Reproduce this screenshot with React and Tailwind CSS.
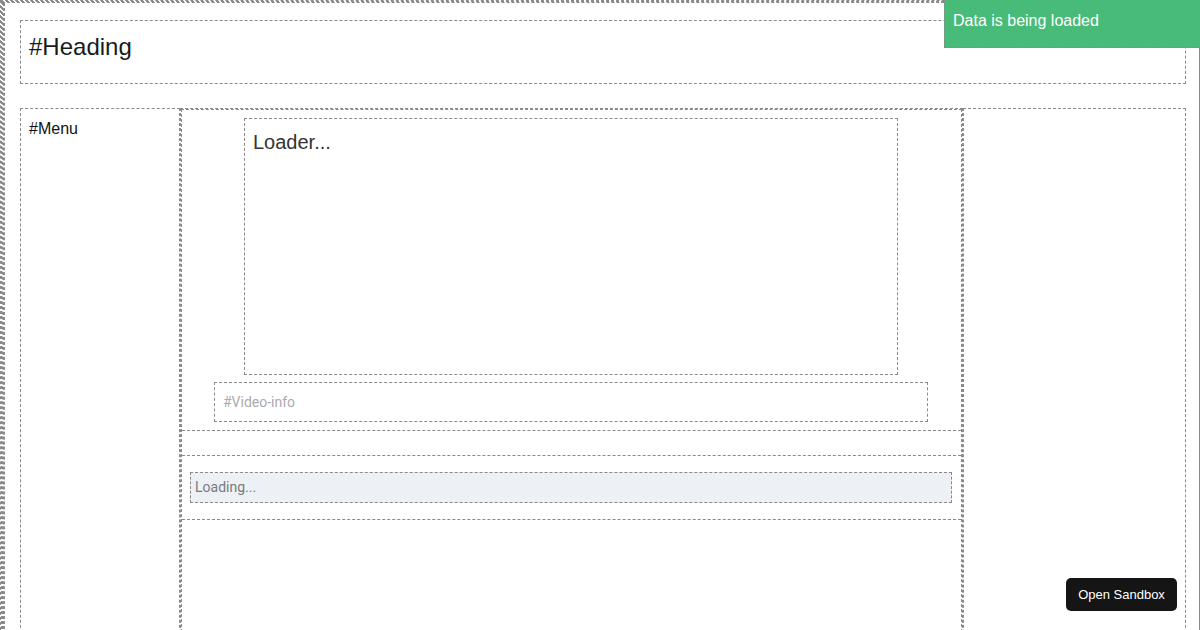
export default function App() {
  const d = "border-dashed border-[#8a8a8a]";
  return (
    <div className="relative w-[1200px] h-[630px] overflow-hidden bg-white" style={{ fontFamily: '"Liberation Sans", Arial, sans-serif' }}>
      <div className={`h-[640px] border ${d}`} style={{ borderRightStyle: "solid" }}>
        <div className={`h-full border-l border-t ${d}`}>
          <div className={`h-full border-l border-t ${d}`}>
            <div className={`h-full border-l ${d}`}>
              <div className={`h-full border-l ${d} pl-[15px] pt-[17px]`}>
                <div className={`w-[1166px] h-[64px] border ${d} px-[8px] pt-[11px]`}>
                  <div className="text-[24px] leading-[30px] text-[#1a1a1a]">#Heading</div>
                </div>
                <div className="mt-[24px] flex h-[560px] w-[1166px]">
                  <div className={`w-[160px] shrink-0 border ${d} px-[8px] pt-[10px]`}>
                    <div className="text-[16px] leading-[20px] text-[#111]">#Menu</div>
                  </div>
                  <div className={`w-[783px] shrink-0 border ${d}`}>
                    <div className={`h-full border ${d} flex flex-col`}>
                      <div className={`border-b ${d} pt-[8px] pb-[8px] flex flex-col items-start`}>
                        <div className={`ml-[62px] w-[654px] h-[257px] border ${d} px-[8px] pt-[11px]`}>
                          <div className="text-[20px] leading-[24px] text-[#333]">Loader...</div>
                        </div>
                        <div className={`ml-[32px] mt-[7px] w-[714px] h-[40px] border ${d} px-[8px] flex items-center`}>
                          <div className="text-[14px] text-[#ababab]" style={{ fontFamily: 'Roboto, sans-serif' }}>#Video-info</div>
                        </div>
                      </div>
                      <div className={`h-[25px] border-b ${d}`}></div>
                      <div className={`border-b ${d} pl-[8px] pr-[9px] pt-[16px] pb-[16px]`}>
                        <div className={`h-[31px] border ${d} bg-[#edf1f5] px-[4px] flex items-center`}>
                          <div className="text-[14px] text-[#7a7a7a]" style={{ fontFamily: 'Roboto, sans-serif' }}>Loading...</div>
                        </div>
                      </div>
                    </div>
                  </div>
                  <div className={`flex-1 border ${d}`}></div>
                </div>
              </div>
            </div>
          </div>
        </div>
      </div>
      <div className={`absolute top-0 right-0 w-[256px] h-[48px] bg-[#48bb78] border-l border-b ${d} px-[8px] pt-[11px]`}>
        <div className="text-[16px] leading-[20px] text-white">Data is being loaded</div>
      </div>
      <div className="absolute left-[1066px] top-[578px] w-[111px] h-[33px] rounded-[5px] bg-[#151515] flex items-center justify-center">
        <span className="text-[13px] text-white">Open Sandbox</span>
      </div>
    </div>
  );
}
